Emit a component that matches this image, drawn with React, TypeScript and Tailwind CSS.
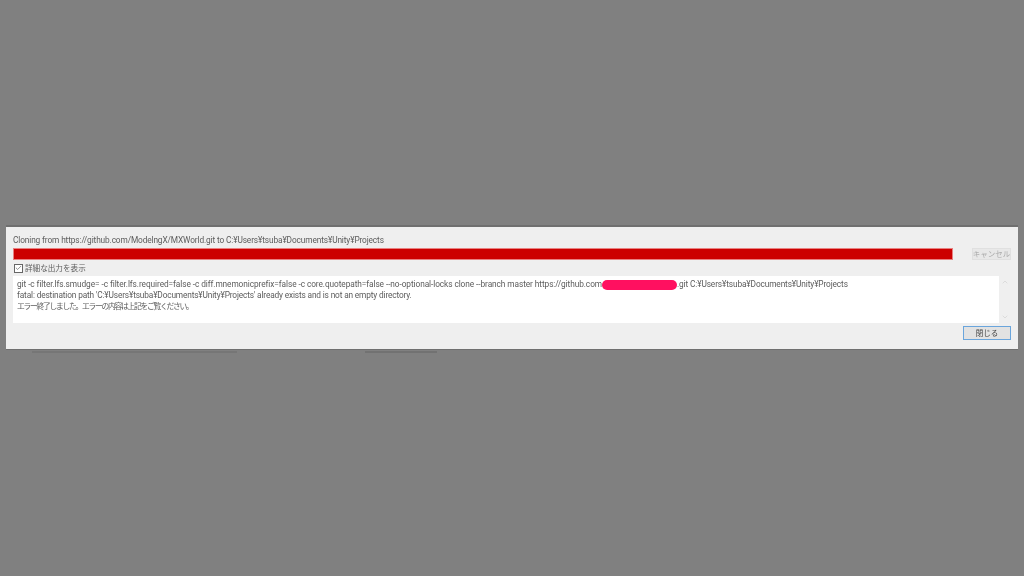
import { Check, ChevronUp, ChevronDown } from 'lucide-react';

const font = "font-['Roboto','Noto_Sans_CJK_JP',sans-serif]";

export default function App() {
    return (
        <div className={`h-[576px] w-[1024px] overflow-hidden bg-[#808080] pt-[225px] pl-[6px] ${font}`}>
            {/* Dialog */}
            <div className="h-[125px] w-[1012px] border-t-2 border-b border-[#6f6f6f] bg-[#efefef] pt-[8px] pl-[7px] pr-[7px] text-[8.3px] leading-[11px] text-[#5c5c5c] blur-[0.5px]">
                <div className="h-[10px] tracking-[-0.12px]">
                    Cloning from https://github.com/ModelngX/MXWorld.git to C:¥Users¥tsuba¥Documents¥Unity¥Projects
                </div>

                <div className="mt-[3px] flex h-[13px] items-start">
                    <div className="h-[12px] w-[940px] border border-[#e88080] bg-[#cc0000]" />
                    <div className="ml-[19px] flex h-[12px] w-[39px] items-center justify-center border border-[#e0e0e0] bg-[#e8e8e8] text-[7.5px] whitespace-nowrap text-[#aaaaaa]">
                        キャンセル
                    </div>
                </div>

                <div className="mt-[2px] flex h-[10px] items-center pl-[1px]">
                    <div className="flex h-[9px] w-[9px] items-center justify-center border border-[#666666] bg-white">
                        <Check size={8} strokeWidth={2} className="text-[#444444]" />
                    </div>
                    <span className="ml-[2px] text-[7.6px]">詳細な出力を表示</span>
                </div>

                <div className="mt-[3px] flex h-[47px]">
                    <div className="w-[986px] overflow-hidden bg-white pt-[3px] pl-[4px] leading-[11px] whitespace-nowrap">
                        <div className="flex items-center tracking-[-0.08px]">
                            <span>git -c filter.lfs.smudge= -c filter.lfs.required=false -c diff.mnemonicprefix=false -c core.quotepath=false --no-optional-locks clone --branch master https://github.com</span>
                            <span className="h-[10px] w-[75px] rounded-full bg-[#ff1060]" />
                            <span className="tracking-[-0.12px]">.git C:¥Users¥tsuba¥Documents¥Unity¥Projects</span>
                        </div>
                        <div className="tracking-[-0.15px]">fatal: destination path 'C:¥Users¥tsuba¥Documents¥Unity¥Projects' already exists and is not an empty directory.</div>
                        <div className="text-[7.8px] tracking-[-1.3px]">エラー終了しました。エラーの内容は上記をご覧ください。</div>
                    </div>
                    <div className="flex w-[12px] flex-col items-center justify-between py-[2px] text-[#d0d0d0]">
                        <ChevronUp size={8} />
                        <ChevronDown size={8} />
                    </div>
                </div>

                <div className="mt-[3px] flex justify-end">
                    <div className="flex h-[14px] w-[48px] items-center justify-center border border-[#6aa5dc] bg-[#e2e2e2] text-[7.5px] text-[#444444]">
                        閉じる
                    </div>
                </div>
            </div>

            {/* What shows of the window behind, just under the dialog */}
            <div className="mt-px flex h-[2px] blur-[0.5px]">
                <div className="ml-[26px] w-[205px] bg-[#767676]" />
                <div className="ml-[128px] w-[72px] bg-[#727272]" />
            </div>
        </div>
    );
}
